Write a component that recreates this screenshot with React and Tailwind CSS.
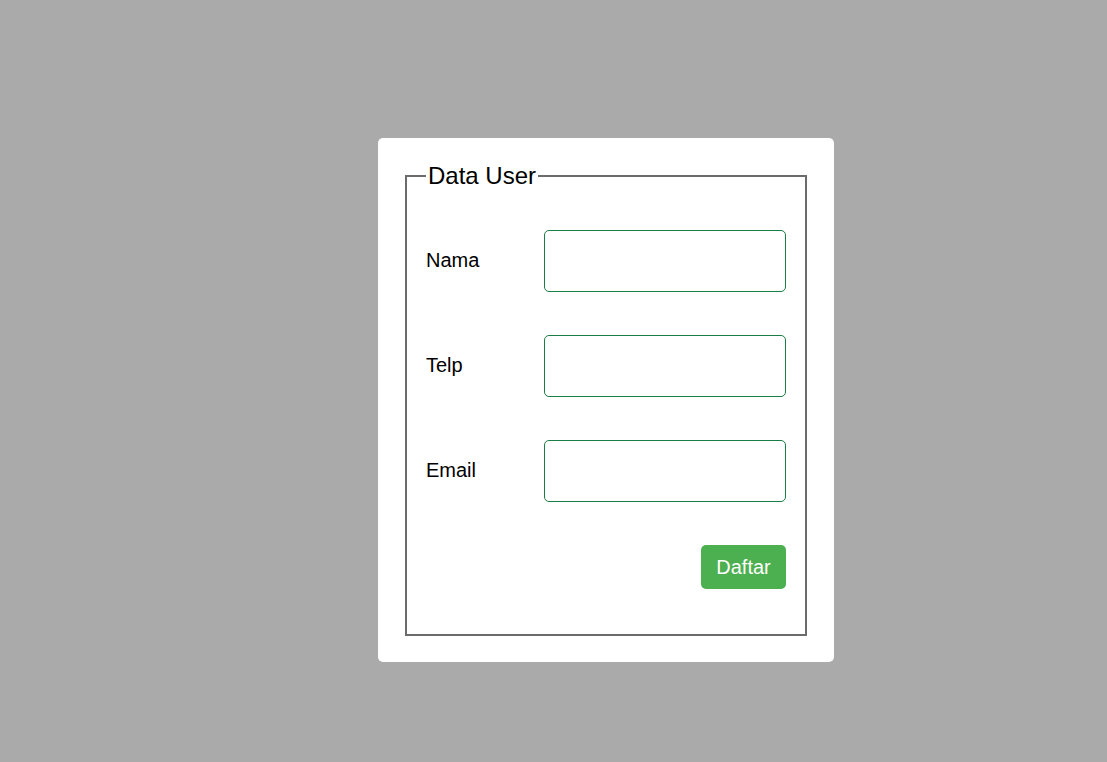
import React from "react";

const fields = ["Nama", "Telp", "Email"];

export default function App() {
  return (
    <div
      className="min-h-screen bg-[#aaaaaa] pt-[138px] pl-[378px]"
      style={{ fontFamily: '"Liberation Sans", Arial, sans-serif' }}
    >
      <div className="w-[456px] rounded-[5px] bg-white px-[25px] pt-[25px] pb-[26px]">
        <fieldset className="mx-[2px] border-2 border-[#6b6b6b] pl-[19px] pr-[19px] pt-[41px] pb-[45px]">
          <legend className="px-[2px] text-[24px] leading-[26px] text-black">Data User</legend>
          <form className="flex flex-col gap-[43px]" onSubmit={(e) => e.preventDefault()}>
            {fields.map((f) => (
              <div key={f} className="flex items-center">
                <label className="w-[118px] -translate-y-px text-[20px] text-black">{f}</label>
                <input
                  type="text"
                  className="h-[62px] w-[242px] rounded-[5px] border border-[#1a7d43] bg-white px-2 outline-none"
                />
              </div>
            ))}
            <div className="flex justify-end">
              <button
                type="submit"
                className="h-[44px] w-[85px] rounded-[5px] bg-[#4caf50] text-[20px] text-white"
              >
                Daftar
              </button>
            </div>
          </form>
        </fieldset>
      </div>
    </div>
  );
}
